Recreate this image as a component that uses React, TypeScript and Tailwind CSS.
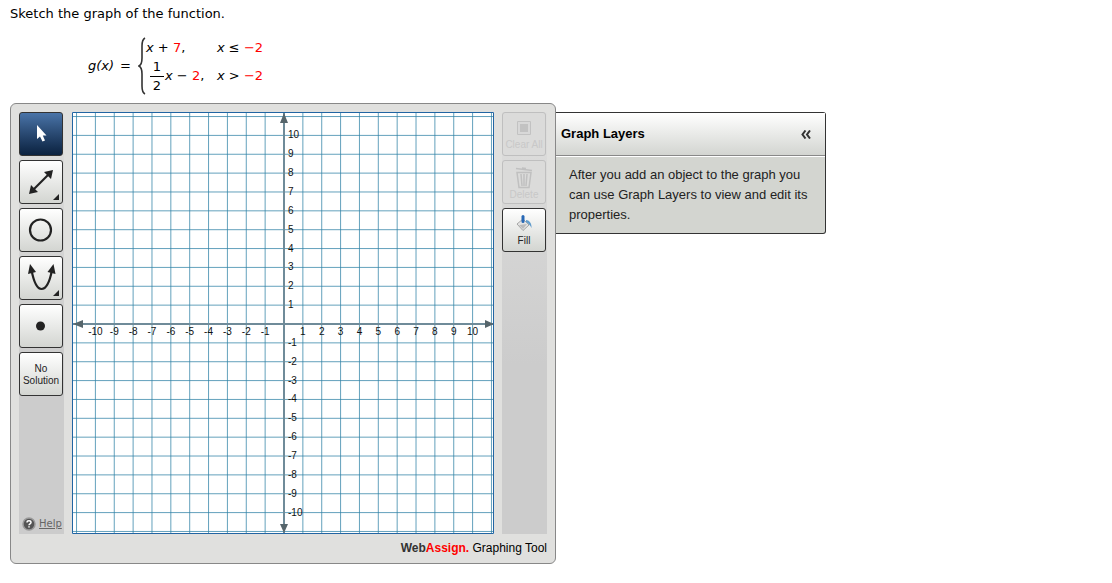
import type { ReactNode } from "react";

const TICKS = Array.from({ length: 23 }, (_, i) => i - 11);
const LABELS = TICKS.filter((n) => n !== 0 && Math.abs(n) <= 10);
const CENTER = 212;
const UNIT = 18.86;

function Problem() {
  return (
    <section className="font-['Verdana','DejaVu_Sans',sans-serif] text-[13px] leading-5 text-black">
      <p>Sketch the graph of the function.</p>
      <div className="mt-3 flex h-[60px] items-center pl-[78px]">
        <span className="flex w-[50px] gap-[6px] whitespace-nowrap"><i>g(x)</i><span>=</span></span>
        <svg className="h-[58px] w-2" viewBox="0 0 8 58" fill="none" stroke="#333" strokeWidth="1.6">
          <path d="M7 1C5 2 4 5 4 9V21C4 25 3 28 1 29C3 30 4 33 4 37V49C4 53 5 56 7 57" />
        </svg>
        <div className="grid grid-cols-[71px_auto] items-center">
          <span><i>x</i> + <span className="text-[#f00]">7</span>,</span>
          <span><i>x</i> ≤ <span className="text-[#f00]">−2</span></span>
          <span className="flex items-center whitespace-nowrap pl-1">
            <span className="flex w-[14px] flex-col text-center leading-[18px]"><span className="border-b border-black">1</span><span>2</span></span>
            <span className="pl-px"><i>x</i> − <span className="text-[#f00]">2</span>,</span>
          </span>
          <span><i>x</i> &gt; <span className="text-[#f00]">−2</span></span>
        </div>
      </div>
    </section>
  );
}

function ToolButton({ label, active, disabled, more, children }: { label: string; active?: boolean; disabled?: boolean; more?: boolean; children: ReactNode }) {
  const look = active
    ? "border-[#333] bg-linear-to-b from-[#4a74a8] to-[#0b2240] text-white"
    : disabled
      ? "border-[#bfbfbf] bg-[#dbdbda] text-[#c8c8c8]"
      : "border-[#333] bg-linear-to-b from-white to-[#d3d5d1] text-[#222]";
  return (
    <button type="button" aria-label={label} disabled={disabled} className={`relative flex h-11 w-11 flex-col items-center justify-center rounded-[3px] border text-[10px] leading-3 ${look}`}>
      {children}
      {more && <svg className="absolute right-[3px] bottom-[3px] h-[6px] w-[6px]" viewBox="0 0 6 6"><path d="M6 0V6H0Z" fill="#222" /></svg>}
    </button>
  );
}

function LeftTools() {
  return (
    <div className="flex w-[45px] flex-col gap-1 bg-linear-to-b from-[#dededd] to-[#ccc] to-60%">
      <ToolButton label="Select" active>
        <svg className="h-[42px] w-[42px]" viewBox="0 0 42 42"><path d="M17 12V26L20 23.500L22.500 28.500L25 27.500L22.800 22.500H26.500Z" fill="#fff" /></svg>
      </ToolButton>
      <ToolButton label="Line" more>
        <svg className="h-[42px] w-[42px]" viewBox="0 0 42 42"><path d="M13 29L29 13" stroke="#222" strokeWidth="2.200" /><path d="M33 9L24 11L31 18ZM9 33L18 31L11 24Z" fill="#222" /></svg>
      </ToolButton>
      <ToolButton label="Circle">
        <svg className="h-[42px] w-[42px]" viewBox="0 0 42 42"><circle cx="20.500" cy="21" r="10.500" fill="none" stroke="#222" strokeWidth="2.200" /></svg>
      </ToolButton>
      <ToolButton label="Parabola" more>
        <svg className="h-[42px] w-[42px]" viewBox="0 0 42 42"><path d="M11.500 13C14 26 17.500 32 21.500 32S29.500 26 32 13" fill="none" stroke="#222" strokeWidth="2.200" /><path d="M10 7L8 17L16 15ZM33.500 7L35.500 17L27.500 15Z" fill="#222" /></svg>
      </ToolButton>
      <ToolButton label="Point">
        <svg className="h-[42px] w-[42px]" viewBox="0 0 42 42"><circle cx="20.500" cy="21" r="4.500" fill="#222" /></svg>
      </ToolButton>
      <ToolButton label="No Solution"><span className="mt-[2px]">No</span><span>Solution</span></ToolButton>
      <a href="#help" className="mt-auto flex items-center gap-[3px] pb-[3px] pl-[3px] text-[10px] leading-3 text-[#666]">
        <svg className="h-[14px] w-[14px]" viewBox="0 0 14 14"><circle cx="7" cy="7" r="6" fill="#555" stroke="#999" strokeWidth="1.500" /><path d="M5 5.500C5 3.200 9 3.200 9 5.500C9 7 7 6.900 7 8.300M7 9.300V10.600" fill="none" stroke="#fff" strokeWidth="1.500" /></svg>
        <span className="font-['DejaVu_Sans',sans-serif] underline">Help</span>
      </a>
    </div>
  );
}

function RightTools() {
  return (
    <div className="flex w-[45px] flex-col gap-1 bg-linear-to-b from-[#dededd] to-[#ccc] to-60%">
      <ToolButton label="Clear All" disabled>
        <svg className="mt-1 mb-1 h-[14px] w-[14px]" viewBox="0 0 14 14"><path d="M.5.5H13.500V13.500H.5Z" fill="#d8d8d8" stroke="#c2c2c2" /><path d="M3 3H11V11H3Z" fill="#c2c2c2" /></svg>
        <span className="whitespace-nowrap">Clear All</span>
      </ToolButton>
      <ToolButton label="Delete" disabled>
        <svg className="mt-1 h-[22px] w-[18px]" viewBox="0 0 18 22" fill="none" stroke="#c0c0c0"><path d="M1 1.500L17 3.500M7 1L11 1.500" strokeWidth="1.500" /><path d="M2 5.500H16L14 20.500H4Z" strokeWidth="1.500" /><path d="M6 7L7 19M9 7V19M12 7L11 19" strokeWidth="1.500" /></svg>
        <span>Delete</span>
      </ToolButton>
      <ToolButton label="Fill">
        <svg className="mt-[2px] mb-1 h-4 w-4" viewBox="0 0 16 16"><path d="M1 9L7 4L13 10L7 15.500Z" fill="#e4e4e4" stroke="#888" strokeWidth=".7" /><path d="M3 10L11 9L7 14Z" fill="#bbb" /><path d="M10 5C13 5 16 8 15.500 13C14 10 13 9 10 7Z" fill="#629dcc" /><path d="M7 1.500V6.500" stroke="#2868b5" strokeWidth="3" strokeLinecap="round" /></svg>
        <span>Fill</span>
      </ToolButton>
    </div>
  );
}

function Graph() {
  return (
    <svg className="aspect-square w-[422px] bg-white" viewBox="0 0 422 422" role="img" aria-label="Coordinate grid">
      <g stroke="#2f82a5" strokeOpacity="0.75">
        {TICKS.map((n) => <path key={n} d={`M${CENTER + n * UNIT} 0V422M0 ${CENTER + n * UNIT}H422`} />)}
      </g>
      <path d="M0 212H422M212 0V422" stroke="#6f8b99" strokeWidth="2" />
      <path d="M1 212L11 208V216ZM422 212L413 208V216ZM212 1L208 11H216ZM212 421L208 412H216Z" fill="#56656b" />
      <g className="text-[10px]" fill="#111">
        {LABELS.map((n) => <text key={`x${n}`} x={CENTER + n * UNIT} y="223" textAnchor="middle">{n}</text>)}
        {LABELS.map((n) => <text key={`y${n}`} x="216" y={CENTER - n * UNIT + 3}>{n}</text>)}
      </g>
      <path d="M.5.5H421.500V421.500H.5Z" fill="none" stroke="#2265a3" />
    </svg>
  );
}

function GraphLayers() {
  return (
    <aside className="mt-[9px] w-[270px] rounded-r-[3px] border border-l-0 border-[#333] bg-[#d3d5d0]">
      <div className="flex h-[43px] items-center justify-between border-b border-[#888] bg-linear-to-b from-white to-[#d3d5d1] pr-[11px] pl-[5px]">
        <h2 className="text-[13px] font-bold text-black">Graph Layers</h2>
        <button type="button" aria-label="Collapse" className="flex h-4 w-4 items-center justify-center">
          <svg className="h-[9px] w-[10px]" viewBox="0 0 10 9" fill="none" stroke="#333" strokeWidth="2"><path d="M4.500.5L1.500 4.500L4.500 8.500M9 .5L6 4.500L9 8.500" /></svg>
        </button>
      </div>
      <p className="border-t border-white px-[13px] pt-2 pb-2 text-[13px] leading-5 text-[#222]">After you add an object to the graph you can use Graph Layers to view and edit its properties.</p>
    </aside>
  );
}

export default function App() {
  return (
    <main className="bg-white px-[10px] pt-1 font-['Liberation_Sans',Arial,sans-serif]">
      <Problem />
      <div className="mt-[7px] flex items-start">
        <div className="shrink-0 rounded-md border border-[#888] bg-[#e0e0de] px-2 pt-2 pb-[5px]">
          <div className="flex gap-2">
            <LeftTools />
            <Graph />
            <RightTools />
          </div>
          <p className="mt-1 text-right text-xs leading-5 text-black"><b className="text-[#333]">Web<span className="text-[#f00]">Assign.</span></b> Graphing Tool</p>
        </div>
        <GraphLayers />
      </div>
    </main>
  );
}
